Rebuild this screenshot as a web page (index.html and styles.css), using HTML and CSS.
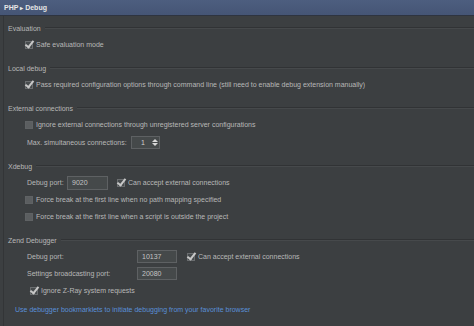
FILE: index.html
```html
<!DOCTYPE html>
<html lang="en">

<head>
    <meta charset="UTF-8">
    <title>PHP Debug</title>
    <link rel="stylesheet" href="styles.css">
</head>

<body>
    <div class="hdr">PHP <span class="crumb">&#9656;</span> Debug</div>
    <div class="panel">
        <div class="sec">
            <div class="sec-title">Evaluation</div>
            <div class="row ind-cb"><span class="cb on"></span>Safe evaluation mode</div>
        </div>
        <div class="sec">
            <div class="sec-title">Local debug</div>
            <div class="row ind-cb"><span class="cb on"></span>Pass required configuration options through command line (still need to enable debug extension manually)</div>
        </div>
        <div class="sec">
            <div class="sec-title">External connections</div>
            <div class="row ind-cb"><span class="cb"></span>Ignore external connections through unregistered server configurations</div>
            <div class="row tall ind-lbl">
                <span class="lbl lbl-max">Max. simultaneous connections:</span>
                <span class="spin"><span class="spin-val">1</span><span class="spin-btn"><i class="up"></i><i class="down"></i></span></span>
            </div>
        </div>
        <div class="sec">
            <div class="sec-title">Xdebug</div>
            <div class="row ind-lbl">
                <span class="lbl lbl-x">Debug port:</span>
                <span class="field field-x">9020</span>
                <span class="cb on"></span>Can accept external connections
            </div>
            <div class="row ind-cb"><span class="cb"></span>Force break at the first line when no path mapping specified</div>
            <div class="row ind-cb"><span class="cb"></span>Force break at the first line when a script is outside the project</div>
        </div>
        <div class="sec sec-last">
            <div class="sec-title">Zend Debugger</div>
            <div class="row ind-lbl">
                <span class="lbl lbl-z">Debug port:</span>
                <span class="field field-z">10137</span>
                <span class="cb on"></span>Can accept external connections
            </div>
            <div class="row ind-lbl">
                <span class="lbl lbl-z">Settings broadcasting port:</span>
                <span class="field field-z">20080</span>
            </div>
            <div class="row ind-sub"><span class="cb on"></span>Ignore Z-Ray system requests</div>
        </div>
        <a class="link" href="#">Use debugger bookmarklets to initiate debugging from your favorite browser</a>
    </div>
</body>

</html>
```

FILE: styles.css
```css
:root {
    --bg: #3c3f41;
    --text: #b8b8b8;
    --field-bg: #45494a;
    --field-border: #5e6163;
    --link: #5a8fd8;
}

html,
body {
    margin: 0;
    padding: 0;
    height: 100%;
    background-color: var(--bg);
    color: var(--text);
    font-family: "Liberation Sans", Arial, sans-serif;
    font-size: 7px;
}

.hdr {
    height: 15px;
    display: flex;
    align-items: center;
    padding-left: 4px;
    background: linear-gradient(#4d5e7f, #455575);
    border-bottom: 1px solid #2e3440;
    color: #e6e6e6;
    font-weight: bold;
    white-space: pre;
}

.crumb {
    font-size: 6px;
}

.panel {
    margin-left: 3px;
    border-left: 1px solid #333537;
    padding: 4px 0 0 4px;
    height: calc(100% - 20px);
}

.sec {
    margin-bottom: 7px;
}

.sec-last {
    margin-bottom: 4px;
}

.sec-title {
    height: 16px;
    display: flex;
    align-items: center;
    white-space: nowrap;
}

.sec-title::after {
    content: '';
    flex: 1;
    margin-left: 4px;
    border-top: 1px solid #313335;
    border-bottom: 1px solid #46494b;
}

.row {
    height: 17px;
    display: flex;
    align-items: center;
    white-space: nowrap;
}

.tall {
    height: 18px;
}

.ind-cb {
    padding-left: 17px;
}

.ind-lbl {
    padding-left: 19px;
}

.ind-sub {
    padding-left: 22px;
}

.cb {
    position: relative;
    width: 8px;
    height: 8px;
    box-sizing: border-box;
    margin-right: 3px;
    background-color: #5b5e60;
    border: 1px solid #5f6264;
    flex: none;
}

.cb.on {
    background-color: #474b4d;
    border-color: #6a6d6f;
}

/* check mark, spills over the box like the Darcula one */
.cb.on::after {
    content: '';
    position: absolute;
    left: 1px;
    top: -3px;
    width: 3px;
    height: 7px;
    border-right: 2px solid #c8c8c8;
    border-bottom: 2px solid #c8c8c8;
    transform: rotate(38deg);
}

.lbl {
    flex: none;
}

.lbl-max {
    width: 104px;
}

.lbl-x {
    width: 40px;
}

.lbl-z {
    width: 110px;
}

.field {
    box-sizing: border-box;
    display: flex;
    align-items: center;
    padding-left: 4px;
    background-color: var(--field-bg);
    border: 1px solid var(--field-border);
    color: #c4c4c4;
    flex: none;
}

.field-x {
    width: 41px;
    height: 14px;
    margin-right: 9px;
}

.field-z {
    width: 40px;
    height: 13px;
    margin-right: 10px;
}

.spin {
    box-sizing: border-box;
    width: 29px;
    height: 13px;
    display: flex;
    align-items: center;
    background-color: var(--field-bg);
    border: 1px solid var(--field-border);
    color: #d0d0d0;
}

.spin-val {
    flex: 1;
    text-align: right;
    padding-right: 5px;
}

.spin-btn {
    width: 9px;
    display: flex;
    flex-direction: column;
    align-items: center;
    gap: 1px;
}

.spin-btn i {
    width: 0;
    height: 0;
    border-left: 3px solid transparent;
    border-right: 3px solid transparent;
}

.spin-btn .up {
    border-bottom: 3px solid #d8d8d8;
}

.spin-btn .down {
    border-top: 3px solid #d8d8d8;
}

.link {
    display: block;
    height: 14px;
    line-height: 14px;
    padding-left: 7px;
    color: var(--link);
    text-decoration: none;
    white-space: nowrap;
}
```
